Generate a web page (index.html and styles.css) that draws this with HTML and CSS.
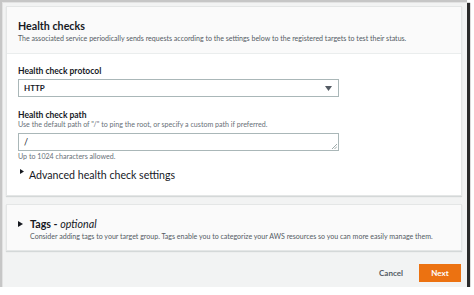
FILE: index.html
```html
<!DOCTYPE html>
<html>
<head>
<meta charset="utf-8">
<link rel="stylesheet" href="styles.css">
</head>
<body>
<div class="frame">
  <section class="card">
    <header class="card-head">
      <h2 class="title">Health checks</h2>
      <p class="desc">The associated service periodically sends requests according to the settings below to the registered targets to test their status.</p>
    </header>
    <div class="card-body">
      <label class="label">Health check protocol</label>
      <div class="select">
        <span class="select-value">HTTP</span>
        <svg class="caret" width="7" height="5" viewBox="0 0 7 5"><path d="M0 0h7L3.5 5z" fill="#545b64"/></svg>
      </div>
      <label class="label label-gap">Health check path</label>
      <p class="hint">Use the default path of "/" to ping the root, or specify a custom path if preferred.</p>
      <div class="textarea">
        <span class="ta-value">/</span>
        <svg class="grip" width="5" height="5" viewBox="0 0 5 5"><path d="M5 0L0 5M5 2.5L2.5 5" stroke="#879596" stroke-width="0.8"/></svg>
      </div>
      <p class="hint note">Up to 1024 characters allowed.</p>
      <div class="expander">
        <svg class="tri-small" width="4" height="5" viewBox="0 0 4 5"><path d="M0 0L4 2.5L0 5z" fill="#16191f"/></svg>
        <span class="exp-text">Advanced health check settings</span>
      </div>
    </div>
  </section>
  <section class="card card-tags">
    <div class="tags-row">
      <svg class="tri" width="5" height="6" viewBox="0 0 5 6"><path d="M0 0L5 3L0 6z" fill="#16191f"/></svg>
      <div>
        <h2 class="title">Tags - <i class="opt">optional</i></h2>
        <p class="desc">Consider adding tags to your target group. Tags enable you to categorize your AWS resources so you can more easily manage them.</p>
      </div>
    </div>
  </section>
  <footer class="footer">
    <button class="btn-cancel">Cancel</button>
    <button class="btn-next">Next</button>
  </footer>
</div>
</body>
</html>
```
FILE: styles.css
```css
html, body {
  margin: 0;
  padding: 0;
  background: #ffffff;
}
body {
  font-family: Lato, "Open Sans", sans-serif;
  color: #16191f;
}
.frame {
  width: 467px;
  height: 287px;
  box-sizing: border-box;
  border-left: 2px solid #c6c6c6;
  border-top: 2px solid #c6c6c6;
  box-shadow: 3px 3px 1px #2a2a2a, inset 1px 1px 0 #e2e2e2;
  background: #f2f3f3;
  padding: 4px 5px 0 4px;
  display: flex;
  flex-direction: column;
}
.card {
  background: #ffffff;
  border: 1px solid #e4e6e6;
  box-shadow: 0 1px 1px rgba(0,22,22,0.12);
}
.card-head {
  background: #fafafa;
  border-bottom: 1px solid #eaeded;
  height: 47px;
  box-sizing: border-box;
  padding: 12px 11px 0;
}
.title {
  margin: 0;
  font-size: 10.7px;
  line-height: 14px;
  font-weight: 700;
}
.desc {
  margin: 2px 0 0;
  font-size: 7.05px;
  line-height: 8px;
  color: #545b64;
}
.card-body {
  padding: 12px 11px 13px;
}
.label {
  display: block;
  font-size: 8.5px;
  line-height: 11px;
  font-weight: 700;
  margin-bottom: 2px;
}
.label-gap {
  margin-top: 13px;
  margin-bottom: 0;
}
.select {
  width: 321px;
  height: 18px;
  box-sizing: border-box;
  border: 1px solid #aab7b8;
  background: #fff;
  display: flex;
  align-items: center;
  justify-content: space-between;
  padding: 0 6px 0 5px;
}
.select-value {
  font-size: 8px;
  font-weight: 700;
}
.caret {
  display: block;
}
.hint {
  margin: 0;
  font-size: 7.1px;
  line-height: 8px;
  color: #687078;
}
.textarea {
  margin-top: 4px;
  width: 321px;
  height: 18px;
  box-sizing: border-box;
  border: 1px solid #aab7b8;
  background: #fff;
  position: relative;
  padding: 1px 5px;
  font-size: 9px;
  line-height: 14px;
}
.ta-value {
  font-size: 9px;
  line-height: 14px;
}
.grip {
  position: absolute;
  right: 1px;
  bottom: 1px;
}
.note {
  margin-top: 2px;
}
.expander {
  margin-top: 7px;
  display: flex;
  align-items: flex-start;
  gap: 5px;
  padding-left: 2px;
}
.tri-small {
  margin-top: 1px;
}
.exp-text {
  font-size: 10.6px;
  line-height: 14px;
}
.card-tags {
  margin-top: 8px;
  background: #fafafa;
  height: 47px;
  box-sizing: border-box;
}
.tags-row {
  display: flex;
  align-items: flex-start;
  gap: 7px;
  padding: 12px 11px 0;
}
.tri {
  margin-top: 4px;
}
.opt {
  font-weight: 400;
}
.footer {
  flex: 1;
  display: flex;
  justify-content: flex-end;
  align-items: flex-end;
  gap: 10px;
  padding: 0 1px 5px 0;
}
.btn-cancel {
  border: 0;
  background: none;
  font-family: inherit;
  font-size: 8px;
  font-weight: 700;
  color: #545b64;
  padding: 0 6px;
  height: 18px;
}
.btn-next {
  border: 0;
  background: #ec7211;
  color: #fff;
  font-family: inherit;
  font-size: 8px;
  font-weight: 700;
  width: 42px;
  height: 18px;
  padding: 0;
}
```
